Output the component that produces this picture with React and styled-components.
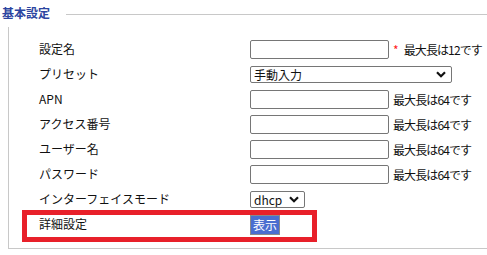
import React from 'react'
import styled, { createGlobalStyle } from 'styled-components'

const GlobalStyle = createGlobalStyle`
    body {
        margin: 0;
        background: #fff;
        font-family: "Noto Sans CJK JP", "Noto Sans", sans-serif;
        font-size: 12px;
        color: #111;
    }
`
const Container = styled.div`
    width: 487px;
    height: 255px;
    overflow: hidden;
`
const Header = styled.div`
    height: 27px;
    display: flex;
    align-items: center;
    padding-bottom: 1px;
    box-sizing: border-box;
`
const Legend = styled.div`
    padding-left: 2px;
    font-size: 12px;
    font-weight: bold;
    color: #2c45a0;
    line-height: 14px;
`
const HeaderLine = styled.div`
    flex: 1;
    margin-left: 16px;
    border-top: 1px solid #c8c8c8;
    margin-top: 2px;
`
const Body = styled.div`
    margin-left: 8px;
    width: 500px;
    height: 222px;
    box-sizing: border-box;
    border-left: 1px solid #c8c8c8;
    border-bottom: 1px solid #c8c8c8;
    padding-top: 10px;
`
const Row = styled.div`
    position: relative;
    height: 25px;
    display: grid;
    grid-template-columns: 211px 1fr;
    align-items: center;
    padding-left: 30px;
`
const Highlight = styled.div`
    position: absolute;
    left: 13px;
    top: -2px;
    width: 295px;
    height: 32px;
    box-sizing: border-box;
    border: 5px solid #e8202a;
    pointer-events: none;
`
const Label = styled.div`
    line-height: 14px;
    padding-bottom: 1px;
`
const Value = styled.div`
    display: flex;
    align-items: center;
    gap: 4px;
`
const TextInput = styled.input`
    width: 139px;
    height: 19px;
    box-sizing: border-box;
    border: 1px solid #767676;
    border-radius: 2px;
    padding: 0 3px;
    font-family: inherit;
    font-size: 12px;
    margin: 0;
`
const SelectBox = styled.div`
    position: relative;
    width: ${(props) => props.$width};
    height: 17px;
`
const Select = styled.select`
    appearance: none;
    width: 100%;
    height: 100%;
    box-sizing: border-box;
    border: 1px solid #767676;
    border-radius: 2px;
    padding: 0 16px 0 3px;
    font-family: inherit;
    font-size: 12px;
    line-height: 15px;
    color: #111;
    background: #fff;
    margin: 0;
`
const Chevron = styled.svg`
    position: absolute;
    right: 6px;
    top: 5px;
    width: 10px;
    height: 7px;
    pointer-events: none;
`
const Hint = styled.span`
    font-size: 12px;
    letter-spacing: -0.9px;
    white-space: nowrap;
`
const Required = styled.span`
    color: #ff2020;
    margin-right: 6px;
`
const ShowButton = styled.button`
    height: 20px;
    padding: 0 2px;
    margin: 0;
    border: 1px solid #8a8a8a;
    background: #4a6ed0;
    color: #fff;
    font-family: inherit;
    font-size: 12px;
    line-height: 16px;
    border-radius: 0;
`

const fields = [
    { label: 'APN' },
    { label: 'アクセス番号' },
    { label: 'ユーザー名' },
    { label: 'パスワード', type: 'password' },
]

function Dropdown({ width, value, options }) {
  return (
    <SelectBox $width={width}>
      <Select defaultValue={value}>
        {options.map((o) => (
          <option key={o.value} value={o.value}>{o.label}</option>
        ))}
      </Select>
      <Chevron viewBox="0 0 10 7">
        <path d="M1 1.2 L5 5.2 L9 1.2" fill="none" stroke="#111" strokeWidth="2.2" />
      </Chevron>
    </SelectBox>
  )
}

export default function App() {
  return (
    <Container>
      <GlobalStyle />
      <Header>
        <Legend>基本設定</Legend>
        <HeaderLine />
      </Header>
      <Body>
        <Row>
          <Label>設定名</Label>
          <Value>
            <TextInput type="text" />
            <Hint><Required>*</Required>最大長は12です</Hint>
          </Value>
        </Row>
        <Row>
          <Label>プリセット</Label>
          <Value>
            <Dropdown width="202px" value="manual" options={[{ value: 'manual', label: '手動入力' }]} />
          </Value>
        </Row>
        {fields.map((f) => (
          <Row key={f.label}>
            <Label>{f.label}</Label>
            <Value>
              <TextInput type={f.type || 'text'} />
              <Hint>最大長は64です</Hint>
            </Value>
          </Row>
        ))}
        <Row>
          <Label>インターフェイスモード</Label>
          <Value>
            <Dropdown
              width="55px"
              value="dhcp"
              options={[{ value: 'dhcp', label: 'dhcp' }, { value: 'static', label: 'static' }]}
            />
          </Value>
        </Row>
        <Row>
          <Label>詳細設定</Label>
          <Value>
            <ShowButton>表示</ShowButton>
          </Value>
          <Highlight />
        </Row>
      </Body>
    </Container>
  )
}
